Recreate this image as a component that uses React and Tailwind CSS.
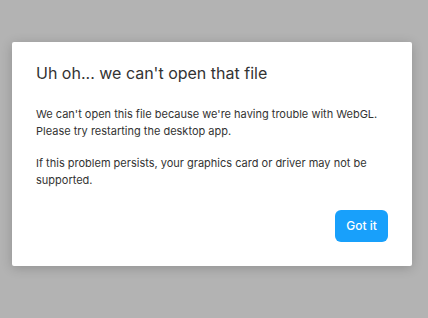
export default function App() {
  return (
    <div className="flex h-[318px] w-[428px] items-start bg-[#b3b3b3] pt-[42px] pl-[12px] font-['Inter',sans-serif]">
      <div className="flex h-[224px] w-[400px] flex-col rounded-[2px] bg-white px-6 shadow-[0_2px_12px_rgba(0,0,0,0.2)]">
        <h1 className="mt-[20px] text-[16px] leading-[22px] text-[#333]">Uh oh... we can't open that file</h1>
        <p className="mt-[22px] text-[11px] leading-[16.5px] text-[#333]">
          We can't open this file because we're having trouble with WebGL.
          <br />
          Please try restarting the desktop app.
        </p>
        <p className="mt-[16px] text-[11px] leading-[16.5px] text-[#333]">
          If this problem persists, your graphics card or driver may not be supported.
        </p>
        <div className="mt-auto mb-[24px] flex justify-end">
          <button className="h-[32px] w-[53px] rounded-[6px] bg-[#18a0fb] text-[12px] font-medium text-white">
            Got it
          </button>
        </div>
      </div>
    </div>
  )
}
